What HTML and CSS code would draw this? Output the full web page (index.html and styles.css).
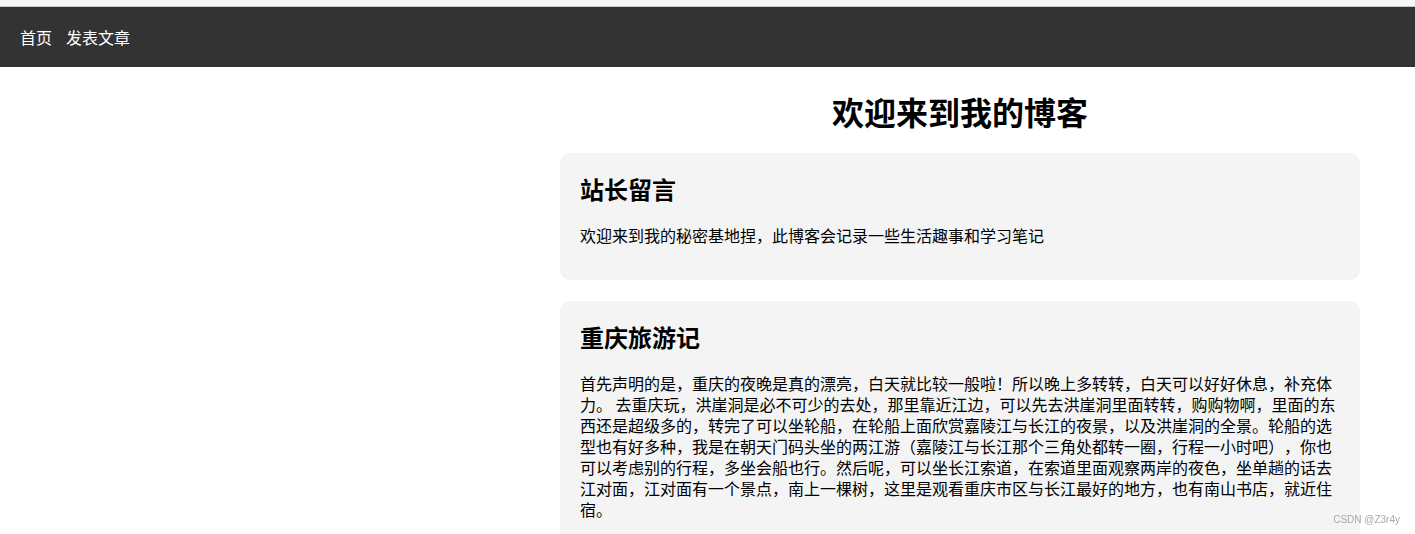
FILE: index.html
```html
<!DOCTYPE html>
<html lang="zh-CN">
<head>
<meta charset="utf-8">
<title>我的博客</title>
<link rel="stylesheet" href="styles.css">
</head>
<body>
<div class="topstrip"></div>
<header class="header">
  <nav class="nav">
    <a href="#">首页</a>
    <a href="#">发表文章</a>
  </nav>
</header>
<main class="main">
  <h1 class="title">欢迎来到我的博客</h1>
  <section class="card">
    <h2>站长留言</h2>
    <p>欢迎来到我的秘密基地捏，此博客会记录一些生活趣事和学习笔记</p>
  </section>
  <section class="card">
    <h2>重庆旅游记</h2>
    <p>首先声明的是，重庆的夜晚是真的漂亮，白天就比较一般啦！所以晚上多转转，白天可以好好休息，补充体力。 去重庆玩，洪崖洞是必不可少的去处，那里靠近江边，可以先去洪崖洞里面转转，购购物啊，里面的东西还是超级多的，转完了可以坐轮船，在轮船上面欣赏嘉陵江与长江的夜景，以及洪崖洞的全景。轮船的选型也有好多种，我是在朝天门码头坐的两江游（嘉陵江与长江那个三角处都转一圈，行程一小时吧），你也可以考虑别的行程，多坐会船也行。然后呢，可以坐长江索道，在索道里面观察两岸的夜色，坐单趟的话去江对面，江对面有一个景点，南上一棵树，这里是观看重庆市区与长江最好的地方，也有南山书店，就近住宿。</p>
  </section>
</main>
<div class="watermark">CSDN @Z3r4y</div>
</body>
</html>
```
FILE: styles.css
```css
html, body {
  margin: 0;
  padding: 0;
}
body {
  font-family: "Noto Sans CJK SC", "Liberation Sans", sans-serif;
  color: #000;
  background: #fff;
  overflow: hidden;
  text-spacing-trim: space-all;
}
.topstrip {
  height: 6px;
  background: #f7f7f9;
  border-bottom: 1px solid #c8c8c8;
}
.header {
  background: #333;
  height: 60px;
  display: flex;
  align-items: center;
  padding-left: 20px;
}
.nav {
  display: flex;
  gap: 14px;
}
.nav a {
  color: #fff;
  text-decoration: none;
  font-size: 16px;
  line-height: 21px;
}
.main {
  width: 800px;
  margin-left: 560px;
}
.title {
  font-size: 32px;
  font-weight: 700;
  text-align: center;
  line-height: 42px;
  margin: 23px 0 21px;
}
.card {
  background: #f4f4f4;
  border-radius: 10px;
  padding: 20px;
  margin-bottom: 21px;
}
.card h2 {
  font-size: 24px;
  font-weight: 700;
  line-height: 32px;
  margin: 0 0 20px;
}
.card p {
  font-size: 16px;
  line-height: 21px;
  margin: 0 0 14px;
}
.watermark {
  position: fixed;
  right: 15px;
  bottom: 9px;
  font-family: "Liberation Sans", sans-serif;
  font-size: 10px;
  color: #a8a8a8;
}
```
